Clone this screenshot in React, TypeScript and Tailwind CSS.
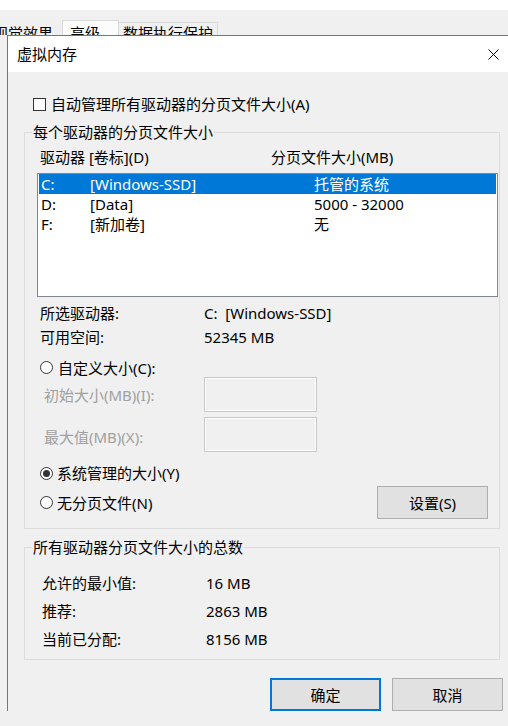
import React from 'react';

const font = { fontFamily: '"Noto Sans", "Noto Sans CJK SC", sans-serif' };

type Drive = { letter: string; label: string; size: string; selected?: boolean };

const drives: Drive[] = [
  { letter: 'C:', label: '[Windows-SSD]', size: '托管的系统', selected: true },
  { letter: 'D:', label: '[Data]', size: '5000 - 32000' },
  { letter: 'F:', label: '[新加卷]', size: '无' },
];

const totals = [
  { label: '允许的最小值:', value: '16 MB', h: 'h-[28px]' },
  { label: '推荐:', value: '2863 MB', h: 'h-[28px]' },
  { label: '当前已分配:', value: '8156 MB', h: 'h-[27px]' },
];

function Radio({ checked }: { checked?: boolean }) {
  return (
    <span className="flex h-[13px] w-[13px] shrink-0 items-center justify-center rounded-full border border-[#333] bg-white">
      {checked && <span className="h-[7px] w-[7px] rounded-full bg-[#333]" />}
    </span>
  );
}

function WinButton({ children, primary }: { children: React.ReactNode; primary?: boolean }) {
  return (
    <button
      className={
        primary
          ? 'flex h-[33px] w-[111px] items-center justify-center border-2 border-[#0078d7] bg-[#e1e1e1] text-[15px] leading-[20px] text-black'
          : 'flex h-[33px] w-[111px] items-center justify-center border border-[#adadad] bg-[#e1e1e1] text-[15px] leading-[20px] text-black'
      }
    >
      {children}
    </button>
  );
}

export default function App() {
  return (
    <div className="h-[726px] w-[508px] overflow-hidden bg-[#f0f0f0] text-[15px] leading-[20px] text-black" style={font}>
      {/* strip above the property sheet */}
      <div className="h-[10px] bg-white" />

      {/* tabs of the system properties window behind */}
      <div className="flex h-[25px] items-end overflow-hidden">
        <div className="h-[13px] w-[62px] overflow-visible whitespace-nowrap pt-[1px]">
          <span className="-ml-[7px] block">视觉效果</span>
        </div>
        <div className="h-[15px] w-[57px] border border-b-0 border-[#d9d9d9] bg-[#fcfcfc] pl-[7px] pt-[2px] whitespace-nowrap">
          高级
        </div>
        <div className="h-[13px] w-[99px] border-r border-t border-[#d9d9d9] pl-[4px] whitespace-nowrap">
          数据执行保护
        </div>
      </div>

      {/* dialog */}
      <div className="ml-[7px] border-l border-t border-[#767676]">
        <div className="flex h-[36px] items-center justify-between bg-white pl-[9px] pr-[9px]">
          <span>虚拟内存</span>
          <svg width="11" height="11" viewBox="0 0 11 11" className="mr-[0px]">
            <path d="M0.5 0.5 L10.5 10.5 M10.5 0.5 L0.5 10.5" stroke="#000" strokeWidth="1" />
          </svg>
        </div>

        <div className="bg-[#f0f0f0]">
          <div className="mt-[22px] flex h-[20px] items-center pl-[25px]">
            <span className="h-[13px] w-[13px] border border-[#333] bg-white" />
            <span className="ml-[5px]">自动管理所有驱动器的分页文件大小(A)</span>
          </div>

          <fieldset className="ml-[16px] mt-[8px] w-[476px] border border-[#dcdcdc] pb-[9px]">
            <legend className="ml-[7px] px-[1px]">每个驱动器的分页文件大小</legend>

            <div className="mt-[5px] flex h-[20px] items-center pl-[15px]">
              <span className="w-[231px]">驱动器 [卷标](D)</span>
              <span>分页文件大小(MB)</span>
            </div>

            <div className="ml-[12px] mt-[6px] h-[124px] w-[461px] border border-[#828790] bg-white px-[1px]">
              {drives.map((d) => (
                <div
                  key={d.letter}
                  className={
                    d.selected
                      ? 'flex h-[20px] items-center bg-[#0078d7] pl-[2px] text-white'
                      : 'flex h-[20px] items-center pl-[2px]'
                  }
                >
                  <span className="w-[49px]">{d.letter}</span>
                  <span className="w-[224px]">{d.label}</span>
                  <span>{d.size}</span>
                </div>
              ))}
            </div>

            <div className="mt-[4px] flex h-[24px] items-center pl-[15px]">
              <span className="w-[164px]">所选驱动器:</span>
              <span>C:&nbsp;&nbsp;[Windows-SSD]</span>
            </div>
            <div className="flex h-[24px] items-center pl-[15px]">
              <span className="w-[164px]">可用空间:</span>
              <span>52345 MB</span>
            </div>

            <div className="mt-[9px] flex h-[19px] items-center pl-[15px]">
              <Radio />
              <span className="ml-[5px]">自定义大小(C):</span>
            </div>

            <div className="flex h-[35px] items-start pl-[19px]">
              <span className="w-[160px] pt-[8px] text-[#a0a0a0]">初始大小(MB)(I):</span>
              <span className="h-[35px] w-[113px] border border-[#c8c8c8] bg-[#f0f0f0] shadow-[inset_0_0_0_1px_#ffffff]" />
            </div>
            <div className="mt-[5px] flex h-[35px] items-start pl-[19px]">
              <span className="w-[160px] pt-[10px] text-[#a0a0a0]">最大值(MB)(X):</span>
              <span className="h-[35px] w-[113px] border border-[#c8c8c8] bg-[#f0f0f0] shadow-[inset_0_0_0_1px_#ffffff]" />
            </div>

            <div className="mt-[11px] flex h-[20px] items-center pl-[15px]">
              <Radio checked />
              <span className="ml-[4px]">系统管理的大小(Y)</span>
            </div>

            <div className="mt-[3px] flex h-[33px] items-center pl-[15px] pr-[11px]">
              <Radio />
              <span className="ml-[4px]">无分页文件(N)</span>
              <span className="ml-auto">
                <WinButton>设置(S)</WinButton>
              </span>
            </div>
          </fieldset>

          <fieldset className="ml-[16px] mt-[8px] w-[476px] border border-[#dcdcdc] pb-[7px]">
            <legend className="ml-[7px] px-[1px]">所有驱动器分页文件大小的总数</legend>
            <div className="mt-[12px]">
              {totals.map((t) => (
                <div key={t.label} className={`flex items-center pl-[17px] ${t.h}`}>
                  <span className="w-[164px]">{t.label}</span>
                  <span>{t.value}</span>
                </div>
              ))}
            </div>
          </fieldset>

          <div className="mt-[18px] flex justify-end gap-[11px] pr-[5px]">
            <WinButton primary>确定</WinButton>
            <WinButton>取消</WinButton>
          </div>
        </div>
      </div>
    </div>
  );
}
